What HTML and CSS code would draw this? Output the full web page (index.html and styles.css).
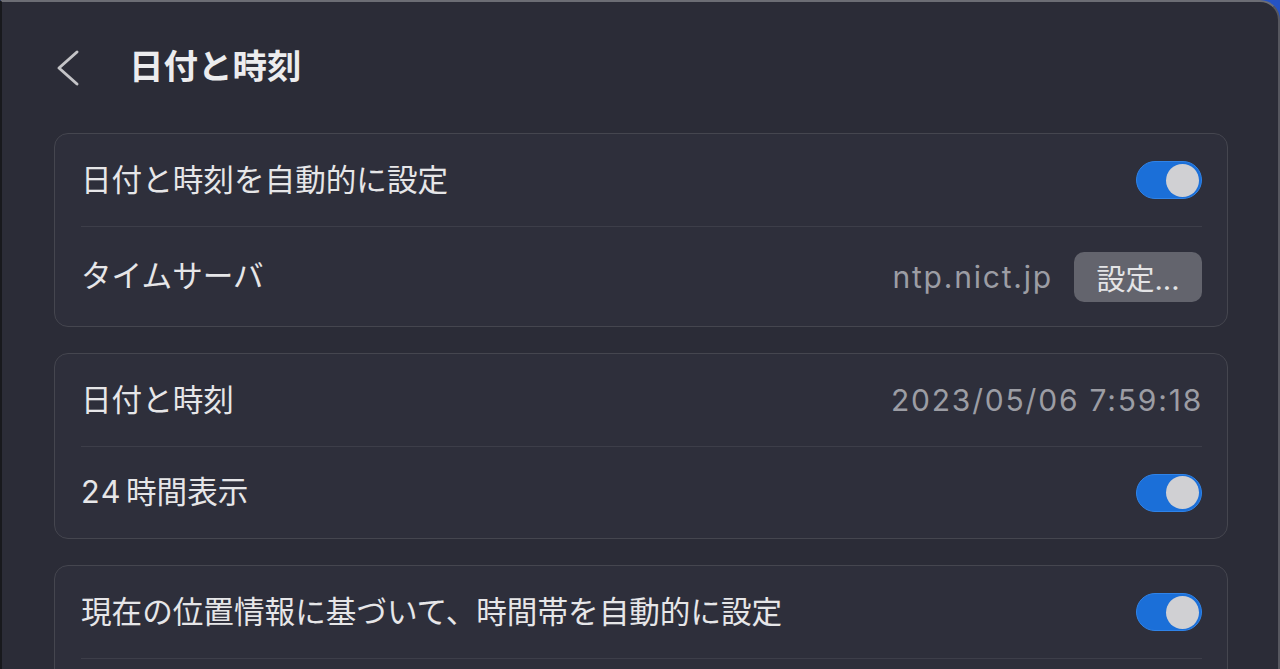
FILE: index.html
```html
<!DOCTYPE html>
<html lang="ja">
  <head>
    <meta charset="UTF-8" />
    <meta name="viewport" content="width=device-width, initial-scale=1.0" />
    <title>日付と時刻</title>
    <link rel="stylesheet" href="styles.css">
  </head>
  <body>
    <div class="window">
      <header class="page-header">
        <button class="back-btn" type="button" aria-label="戻る">
          <svg width="24" height="38" viewBox="0 0 24 38">
            <polyline points="21,3 3,19 21,35" fill="none" stroke="#c4c4c7" stroke-width="3" stroke-linecap="round" stroke-linejoin="round" />
          </svg>
        </button>
        <h1 class="page-title">日付と時刻</h1>
      </header>

      <section class="card">
        <div class="row">
          <span class="row-label">日付と時刻を自動的に設定</span>
          <span class="toggle is-on"><span class="toggle-knob"></span></span>
        </div>
        <div class="row row-tall">
          <span class="row-label">タイムサーバ</span>
          <div class="row-end">
            <span class="row-value">ntp.nict.jp</span>
            <button class="btn" type="button">設定...</button>
          </div>
        </div>
      </section>

      <section class="card">
        <div class="row">
          <span class="row-label">日付と時刻</span>
          <span class="row-value">2023/05/06 7:59:18</span>
        </div>
        <div class="row">
          <span class="row-label"><span class="num">24</span>時間表示</span>
          <span class="toggle is-on"><span class="toggle-knob"></span></span>
        </div>
      </section>

      <section class="card">
        <div class="row">
          <span class="row-label">現在の位置情報に基づいて、時間帯を自動的に設定</span>
          <span class="toggle is-on"><span class="toggle-knob"></span></span>
        </div>
        <div class="row">
          <span class="row-label">&nbsp;</span>
        </div>
      </section>
    </div>
  </body>
</html>
```

FILE: styles.css
```css
* {
  box-sizing: border-box;
  margin: 0;
  padding: 0;
}

html,
body {
  height: 100%;
  overflow: hidden;
}

body {
  background: #2553c4;
  color: #e6e6e8;
  font-family: Inter, 'Noto Sans CJK JP', 'Noto Sans', sans-serif;
}

.window {
  background: #2b2c37;
  border-top: 2px solid #6c6d74;
  border-left: 2px solid #18191d;
  border-right: 2px solid #56575f;
  border-top-right-radius: 20px;
  min-height: 100%;
  padding: 0 50px 0 52px;
}

.page-header {
  display: flex;
  align-items: center;
  height: 131px;
  padding-left: 2px;
}

.back-btn {
  background: none;
  border: 0;
  display: flex;
  width: 24px;
  height: 38px;
  margin-right: 49px;
}

.page-title {
  font-size: 34.5px;
  font-weight: bold;
  color: #ececee;
  line-height: 1;
}

.card {
  background: #2e2f3b;
  border: 1px solid #45464f;
  border-radius: 14px;
  padding: 0 25px 0 26px;
}

.card + .card {
  margin-top: 26px;
}

.row {
  display: flex;
  align-items: center;
  justify-content: space-between;
  height: 92px;
}

.row + .row {
  border-top: 1px solid #3d3e49;
}

.row-tall {
  height: 100px;
}

.row-label {
  font-size: 30.6px;
  line-height: 1;
  color: #e6e6e8;
}

.num {
  letter-spacing: 1.5px;
  margin-right: 4px;
}

.row-end {
  display: flex;
  align-items: center;
  gap: 22px;
}

.row-value {
  font-size: 30px;
  letter-spacing: 1.8px;
  line-height: 1;
  color: #9c9da4;
  margin-right: -1px;
}

.btn {
  background: #63646d;
  border: 0;
  border-radius: 10px;
  color: #e4e4e6;
  font-family: inherit;
  font-size: 29px;
  width: 128px;
  height: 50px;
  display: inline-flex;
  align-items: center;
  justify-content: center;
}

.toggle {
  display: inline-flex;
  align-items: center;
  width: 66px;
  height: 38px;
  border-radius: 19px;
  background: #3a3b46;
  border: 1px solid #4a4b55;
  padding: 2px;
}

.toggle.is-on {
  background: #1b6fd8;
  border-color: #2f83e8;
  justify-content: flex-end;
}

.toggle-knob {
  width: 33px;
  height: 33px;
  border-radius: 50%;
  background: #d0d0d3;
}
```
